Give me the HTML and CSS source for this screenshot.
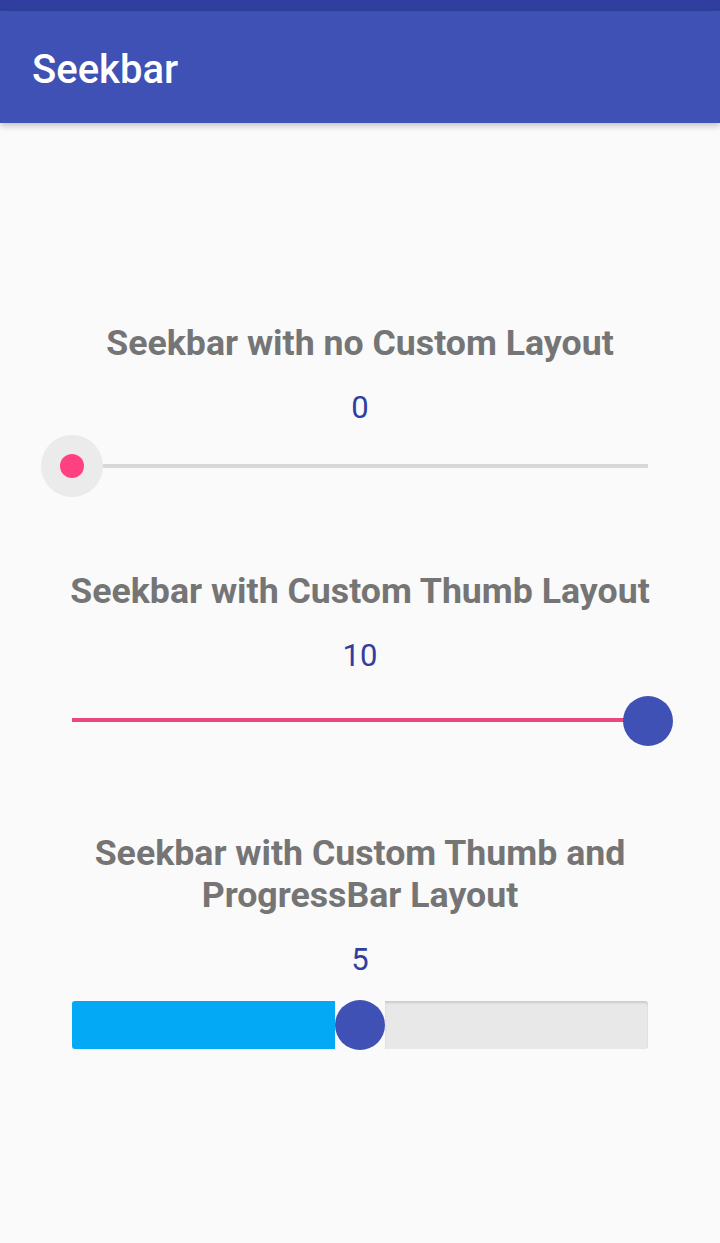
FILE: index.html
```html
<!DOCTYPE html>
<html lang="en">

<head>
    <meta charset="UTF-8">
    <meta name="viewport" content="width=device-width, initial-scale=1.0">
    <title>Seekbar</title>
    <link rel="stylesheet" href="styles.css">
</head>

<body>
    <div class="status-bar"></div>
    <header class="toolbar">
        <h1>Seekbar</h1>
    </header>

    <main class="content">
        <section class="demo demo-plain">
            <h2>Seekbar with no Custom Layout</h2>
            <div class="value">0</div>
            <div class="seekbar plain">
                <div class="track"></div>
                <span class="halo"></span>
                <span class="thumb small"></span>
            </div>
        </section>

        <section class="demo demo-thumb">
            <h2>Seekbar with Custom Thumb Layout</h2>
            <div class="value">10</div>
            <div class="seekbar custom">
                <div class="track pink"></div>
                <span class="thumb big end"></span>
            </div>
        </section>

        <section class="demo demo-progress">
            <h2>Seekbar with Custom Thumb and<br>ProgressBar Layout</h2>
            <div class="value">5</div>
            <div class="progress">
                <div class="progress-fill"></div>
                <span class="progress-thumb"></span>
                <div class="progress-rest"></div>
            </div>
        </section>
    </main>
</body>

</html>
```

FILE: styles.css
```css
/* General Reset */
* {
    margin: 0;
    padding: 0;
    box-sizing: border-box;
}

body {
    font-family: 'Roboto', 'Liberation Sans', sans-serif;
    background-color: #fafafa;
    color: #757575;
}

.status-bar {
    height: 11px;
    background-color: #303f9f;
}

.toolbar {
    display: flex;
    align-items: center;
    height: 112px;
    padding: 4px 32px 0;
    background-color: #3f51b5;
    box-shadow: 0 3px 6px rgba(0, 0, 0, 0.22);
    position: relative;
}

.toolbar h1 {
    color: #fff;
    font-size: 40px;
    font-weight: 500;
}

.content {
    padding-top: 199px;
}

.demo h2 {
    text-align: center;
    font-size: 35.7px;
    font-weight: bold;
    line-height: 42px;
    color: #757575;
}

.value {
    text-align: center;
    font-size: 31px;
    line-height: 40px;
    margin-top: 24px;
    color: #303f9f;
}

.seekbar {
    position: relative;
    width: 576px;
    height: 64px;
    margin: 0 auto;
    display: flex;
    align-items: center;
}

.seekbar.plain {
    margin-top: 6px;
}

.seekbar.custom {
    margin-top: 12px;
}

.demo-thumb {
    margin-top: 72px;
}

.demo-progress {
    margin-top: 80px;
}

.track {
    width: 100%;
    height: 4px;
    background-color: #d8d8d8;
}

.track.pink {
    background-color: #ea4680;
}

.halo {
    position: absolute;
    left: -31px;
    top: 1px;
    width: 62px;
    height: 62px;
    border-radius: 50%;
    background-color: #ebebeb;
}

.thumb {
    position: absolute;
    border-radius: 50%;
}

.thumb.small {
    left: -12px;
    top: 20px;
    width: 24px;
    height: 24px;
    background-color: #ff4081;
}

.thumb.big {
    right: -25px;
    top: 8px;
    width: 50px;
    height: 50px;
    background-color: #3f51b5;
}

.progress {
    display: flex;
    align-items: center;
    width: 576px;
    height: 50px;
    margin: 20px auto 0;
}

.progress-fill {
    width: 263px;
    height: 48px;
    background-color: #03a9f4;
    border-radius: 3px 0 0 3px;
}

.progress-thumb {
    width: 50px;
    height: 50px;
    border-radius: 50%;
    background-color: #3f51b5;
}

.progress-rest {
    flex: 1;
    height: 48px;
    background-color: #e8e8e8;
    border-radius: 0 3px 3px 0;
    box-shadow: inset 0 2px 2px rgba(0, 0, 0, 0.12);
}
```
